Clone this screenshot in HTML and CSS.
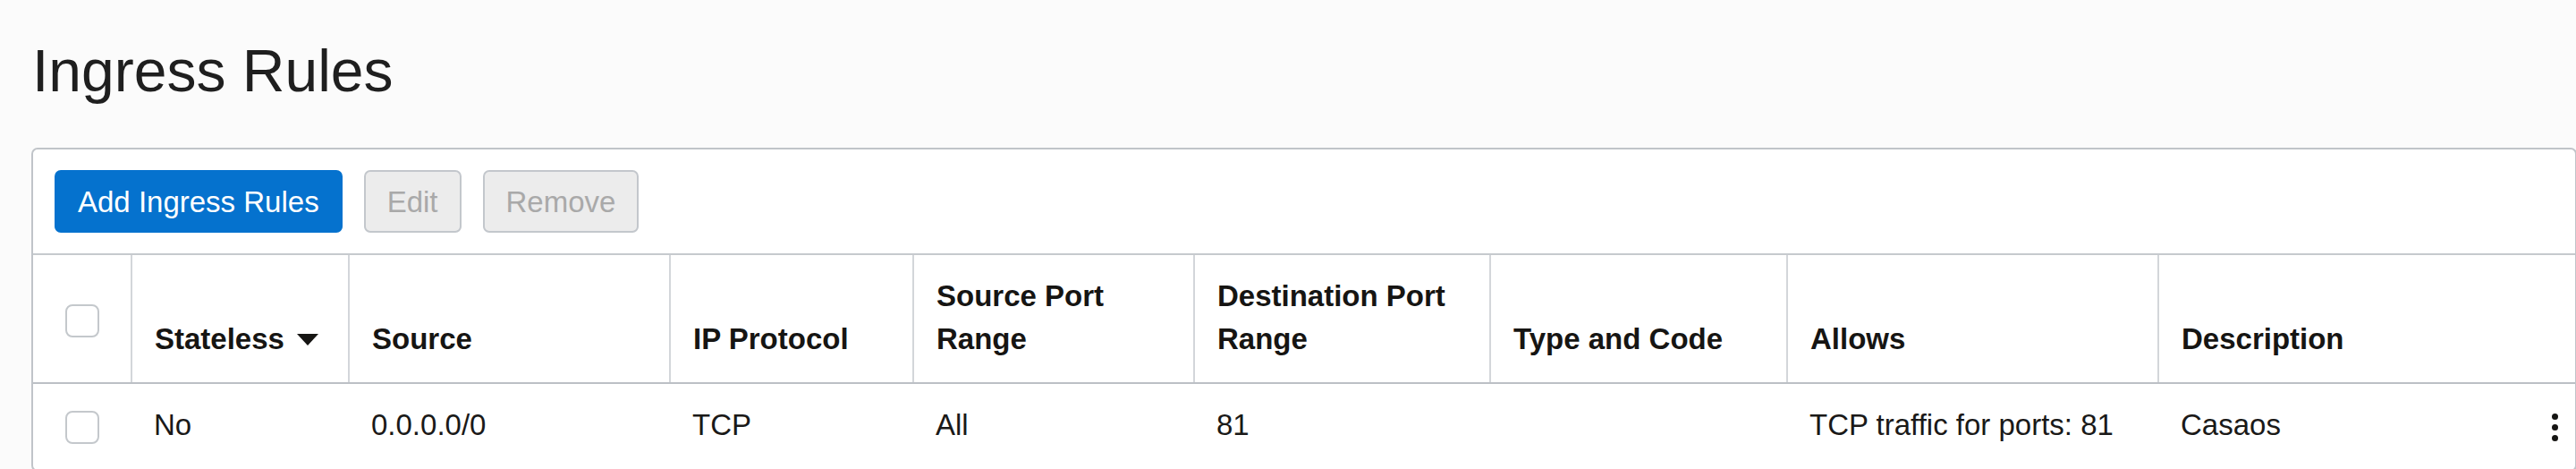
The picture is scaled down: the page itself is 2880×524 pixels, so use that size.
FILE: index.html
```html
<!DOCTYPE html>
<html lang="en">
<head>
<meta charset="utf-8">
<title>Ingress Rules</title>
<link rel="stylesheet" href="styles.css">
</head>
<body>
<main class="page">
  <h1 class="title">Ingress Rules</h1>
  <section class="panel">
    <div class="toolbar">
      <button class="btn btn-primary" type="button">Add Ingress Rules</button>
      <button class="btn btn-disabled" type="button" disabled>Edit</button>
      <button class="btn btn-disabled" type="button" disabled>Remove</button>
    </div>
    <table class="rules">
      <colgroup>
        <col class="c-check">
        <col class="c-stateless">
        <col class="c-source">
        <col class="c-proto">
        <col class="c-sport">
        <col class="c-dport">
        <col class="c-type">
        <col class="c-allows">
        <col class="c-desc">
        <col class="c-actions">
      </colgroup>
      <thead>
        <tr>
          <th class="cell-check"><span class="checkbox"></span></th>
          <th><span class="sortable">Stateless <span class="sort-arrow"></span></span></th>
          <th>Source</th>
          <th>IP Protocol</th>
          <th>Source Port Range</th>
          <th>Destination Port Range</th>
          <th>Type and Code</th>
          <th>Allows</th>
          <th>Description</th>
          <th class="cell-actions"></th>
        </tr>
      </thead>
      <tbody>
        <tr>
          <td class="cell-check"><span class="checkbox"></span></td>
          <td>No</td>
          <td>0.0.0.0/0</td>
          <td>TCP</td>
          <td>All</td>
          <td>81</td>
          <td></td>
          <td>TCP traffic for ports: 81</td>
          <td>Casaos</td>
          <td class="cell-actions"><span class="kebab"><i></i><i></i><i></i></span></td>
        </tr>
      </tbody>
    </table>
  </section>
</main>
</body>
</html>
```
FILE: styles.css
```css
* { box-sizing: border-box; }

html, body {
  margin: 0;
  padding: 0;
  background: #fbfbfb;
  font-family: "Liberation Sans", Arial, sans-serif;
  color: #161513;
  overflow: hidden;
}

.page {
  padding: 41px 0 0 35px;
}

.title {
  margin: 0;
  font-size: 66px;
  line-height: 76px;
  font-weight: 400;
  color: #1f1f1f;
  padding-left: 1px;
}

.panel {
  margin-top: 48px;
  width: 2846px;
  background: #ffffff;
  border: 2px solid #c0c4c9;
  border-radius: 7px;
  overflow: hidden;
}

.toolbar {
  display: flex;
  gap: 24px;
  padding: 23px 24px 23px;
  border-bottom: 2px solid #c6cace;
}

.btn {
  height: 70px;
  padding: 0 24px;
  font-family: inherit;
  font-size: 33px;
  border-radius: 7px;
  border: 2px solid transparent;
  line-height: 1;
}

.btn-primary {
  background: #0572ce;
  border-color: #0572ce;
  color: #ffffff;
}

.btn-disabled {
  background: #ececec;
  border-color: #c3c7cc;
  color: #a9a9a9;
}

.rules {
  border-collapse: collapse;
  table-layout: fixed;
  width: 2842px;
}

.c-check { width: 110px; }
.c-stateless { width: 243px; }
.c-source { width: 359px; }
.c-proto { width: 272px; }
.c-sport { width: 314px; }
.c-dport { width: 331px; }
.c-type { width: 332px; }
.c-allows { width: 415px; }
.c-desc { width: 407px; }
.c-actions { width: 59px; }

.rules th,
.rules td {
  font-size: 33px;
  line-height: 48px;
  text-align: left;
  padding: 22px 24px 24px 25px;
}

.rules th {
  font-weight: 700;
  vertical-align: bottom;
  border-left: 2px solid #d3d6da;
  border-bottom: 2px solid #bcc0c5;
  color: #161513;
}

.rules th:first-child,
.rules th.cell-actions {
  border-left: none;
}

.rules td {
  font-weight: 400;
  vertical-align: top;
  color: #1a1918;
  padding-bottom: 26px;
}

.rules td.cell-check,
.rules td.cell-actions {
  padding-top: 0;
  padding-bottom: 4px;
}

.rules .cell-check {
  vertical-align: middle;
  text-align: center;
  padding: 0;
}

.rules .cell-actions {
  vertical-align: middle;
  text-align: center;
  padding: 0 0 0 14px;
}

.checkbox {
  display: inline-block;
  width: 38px;
  height: 37px;
  border: 2px solid #c4c8cc;
  border-radius: 8px;
  background: #ffffff;
  vertical-align: middle;
}

.sortable {
  display: inline-flex;
  align-items: center;
}

.sort-arrow {
  display: inline-block;
  width: 0;
  height: 0;
  margin-left: 14px;
  border-left: 12px solid transparent;
  border-right: 12px solid transparent;
  border-top: 13px solid #161513;
}

.kebab {
  display: inline-flex;
  flex-direction: column;
  gap: 5px;
  vertical-align: middle;
}

.kebab i {
  display: block;
  width: 7px;
  height: 7px;
  border-radius: 50%;
  background: #161513;
}
```
